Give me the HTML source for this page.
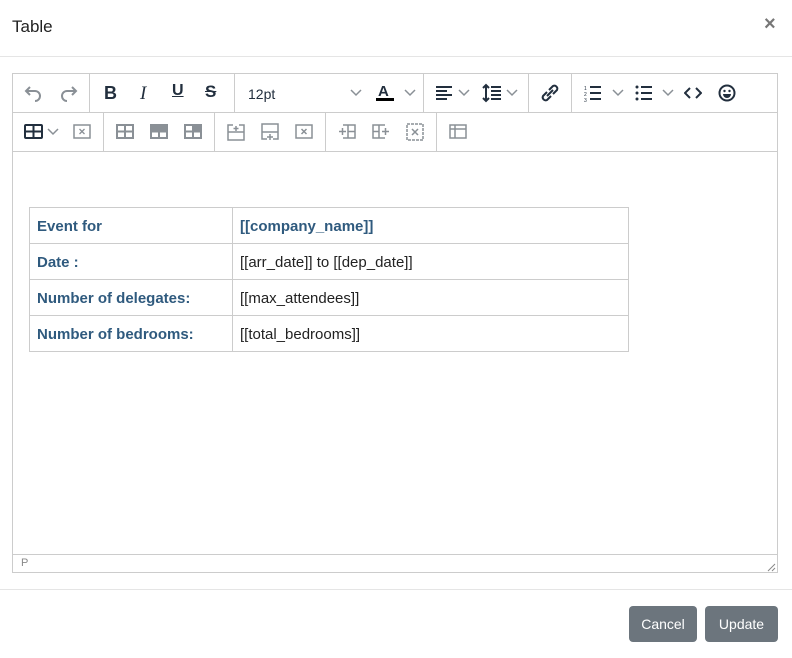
<!DOCTYPE html>
<html><head><style>
*{box-sizing:border-box;margin:0;padding:0}
body{width:792px;height:658px;background:#fff;font-family:"Liberation Sans",sans-serif;position:relative;overflow:hidden;color:#222}
.a{position:absolute}
.ic{position:absolute;color:#222f3e}
.sep{position:absolute;width:1px;background:#ccc}
svg{display:block}
td{border:1px solid #ccc;height:36px;padding:2px 7px 0;font-size:15px}
.lb{color:#2f5a7e;font-weight:bold}
.btn{position:absolute;top:606px;height:36px;background:#6c757d;color:#fff;border-radius:4px;font-size:14px;line-height:36px;text-align:center}
</style></head><body>
<div class="a" style="left:12px;top:17px;font-size:17px;color:#222">Table</div>
<div class="a" style="left:764px;top:13px;font-size:20px;color:#777;font-weight:bold">×</div>
<div class="a" style="left:0;top:56px;width:792px;height:1px;background:#e5e5e5"></div>

<div class="a" style="left:12px;top:73px;width:766px;height:500px;border:1px solid #ccc"></div>
<div class="a" style="left:13px;top:112px;width:764px;height:1px;background:#ccc"></div>
<div class="a" style="left:13px;top:151px;width:764px;height:1px;background:#ccc"></div>
<div class="a" style="left:13px;top:554px;width:764px;height:1px;background:#ccc"></div>
<div class="a" style="left:21px;top:557px;font-size:11px;color:#888">P</div>
<svg class="a" style="left:766px;top:562px" width="10" height="10"><path d="M9 2L2 9M9 6L6 9" stroke="#888"/></svg>

<div class="sep" style="left:89px;top:74px;height:38px"></div>
<div class="sep" style="left:234px;top:74px;height:38px"></div>
<div class="sep" style="left:423px;top:74px;height:38px"></div>
<div class="sep" style="left:528px;top:74px;height:38px"></div>
<div class="sep" style="left:571px;top:74px;height:38px"></div>
<div class="sep" style="left:103px;top:113px;height:38px"></div>
<div class="sep" style="left:214px;top:113px;height:38px"></div>
<div class="sep" style="left:325px;top:113px;height:38px"></div>
<div class="sep" style="left:436px;top:113px;height:38px"></div>

<svg class="a" style="left:24px;top:84px" width="20" height="18"><path d="M6 3L2 7l4 4M2 7h9a5 5 0 0 1 0 10" fill="none" stroke="#8a9096" stroke-width="2"/></svg>
<svg class="a" style="left:58px;top:84px" width="20" height="18"><path d="M14 3l4 4-4 4M18 7H9a5 5 0 0 0 0 10" fill="none" stroke="#8a9096" stroke-width="2"/></svg>
<div class="ic" style="left:104px;top:83px;font-size:18px;font-weight:bold">B</div>
<div class="ic" style="left:140px;top:83px;font-size:19px;font-style:italic;font-family:'Liberation Serif',serif">I</div>
<div class="ic" style="left:172px;top:82px;font-size:16px;font-weight:bold;text-decoration:underline">U</div>
<div class="ic" style="left:205px;top:82px;font-size:17px;font-weight:bold;text-decoration:line-through">S</div>
<div class="a" style="left:248px;top:86px;font-size:14px;color:#222f3e">12pt</div>
<svg class="a" style="left:350px;top:89px" width="12" height="8"><path d="M1 1l5 5 5-5" fill="none" stroke="#8a9096" stroke-width="1.5"/></svg>
<div class="ic" style="left:378px;top:83px;font-size:15px;font-weight:bold">A</div>
<div class="a" style="left:376px;top:98px;width:18px;height:3px;background:#000"></div>
<svg class="a" style="left:404px;top:89px" width="12" height="8"><path d="M1 1l5 5 5-5" fill="none" stroke="#8a9096" stroke-width="1.5"/></svg>
<svg class="a" style="left:436px;top:85px" width="18" height="16"><path d="M0 2h16M0 6h11M0 10h16M0 14h11" stroke="#222f3e" stroke-width="2"/></svg>
<svg class="a" style="left:458px;top:89px" width="12" height="8"><path d="M1 1l5 5 5-5" fill="none" stroke="#8a9096" stroke-width="1.5"/></svg>
<svg class="a" style="left:482px;top:83px" width="22" height="20"><path d="M4 2v16M1 5l3-3 3 3M1 15l3 3 3-3M9 4h10M9 8h10M9 12h10M9 16h10" fill="none" stroke="#222f3e" stroke-width="2"/></svg>
<svg class="a" style="left:506px;top:89px" width="12" height="8"><path d="M1 1l5 5 5-5" fill="none" stroke="#8a9096" stroke-width="1.5"/></svg>
<svg class="a" style="left:539px;top:82px" width="22" height="22"><path d="M8 14l6-6M8 10l-4 4a3 3 0 0 0 4 4l4-4M14 12l4-4a3 3 0 0 0-4-4l-4 4" fill="none" stroke="#222f3e" stroke-width="2"/></svg>
<svg class="a" style="left:584px;top:84px" width="18" height="18"><path d="M6 3h11M6 9h11M6 15h11" stroke="#222f3e" stroke-width="2"/><text x="0" y="6" font-size="5" fill="#222f3e">1</text><text x="0" y="12" font-size="5" fill="#222f3e">2</text><text x="0" y="18" font-size="5" fill="#222f3e">3</text></svg>
<svg class="a" style="left:612px;top:89px" width="12" height="8"><path d="M1 1l5 5 5-5" fill="none" stroke="#8a9096" stroke-width="1.5"/></svg>
<svg class="a" style="left:635px;top:84px" width="18" height="18"><circle cx="2" cy="3" r="1.5" fill="#222f3e"/><circle cx="2" cy="9" r="1.5" fill="#222f3e"/><circle cx="2" cy="15" r="1.5" fill="#222f3e"/><path d="M6 3h11M6 9h11M6 15h11" stroke="#222f3e" stroke-width="2"/></svg>
<svg class="a" style="left:662px;top:89px" width="12" height="8"><path d="M1 1l5 5 5-5" fill="none" stroke="#8a9096" stroke-width="1.5"/></svg>
<svg class="a" style="left:684px;top:86px" width="18" height="14"><path d="M6 2L1 7l5 5M12 2l5 5-5 5" fill="none" stroke="#222f3e" stroke-width="2"/></svg>
<svg class="a" style="left:718px;top:83px" width="20" height="20"><circle cx="9" cy="10" r="7.5" fill="none" stroke="#222f3e" stroke-width="2"/><circle cx="6.5" cy="8" r="1.2" fill="#222f3e"/><circle cx="11.5" cy="8" r="1.2" fill="#222f3e"/><path d="M5 11h8a4 4 0 0 1-8 0z" fill="#222f3e"/></svg>

<svg class="a" style="left:24px;top:124px" width="20" height="16"><rect x="1" y="1" width="17" height="13" rx="1" fill="none" stroke="#222f3e" stroke-width="2"/><path d="M1 7.5h17M9.5 1v13" stroke="#222f3e" stroke-width="2"/></svg>
<svg class="a" style="left:47px;top:128px" width="12" height="8"><path d="M1 1l5 5 5-5" fill="none" stroke="#8a9096" stroke-width="1.5"/></svg>
<svg class="a" style="left:73px;top:124px" width="18" height="16"><rect x="1" y="1" width="16" height="13" fill="none" stroke="#8a9096" stroke-width="1.5"/><path d="M6.5 5l5 5M11.5 5l-5 5" stroke="#8a9096" stroke-width="1.3"/></svg>
<svg class="a" style="left:116px;top:124px" width="18" height="16"><rect x="1" y="1" width="16" height="13" fill="none" stroke="#8a9096" stroke-width="2"/><path d="M1 7.5h16M9 1v13" stroke="#8a9096" stroke-width="2"/></svg>
<svg class="a" style="left:150px;top:124px" width="18" height="16"><rect x="1" y="1" width="16" height="13" fill="none" stroke="#8a9096" stroke-width="2"/><rect x="1" y="1" width="16" height="6" fill="#8a9096"/><path d="M1 7.5h16M9 7v7" stroke="#8a9096" stroke-width="2"/></svg>
<svg class="a" style="left:184px;top:124px" width="18" height="16"><rect x="1" y="1" width="16" height="13" fill="none" stroke="#8a9096" stroke-width="2"/><rect x="9" y="1" width="8" height="6" fill="#8a9096"/><path d="M1 7.5h16M9 1v13" stroke="#8a9096" stroke-width="2"/></svg>
<svg class="a" style="left:227px;top:123px" width="18" height="18"><path d="M6 2H1v15h16V2h-5M1 9h16M9 3v5M6.5 5.5h5" fill="none" stroke="#8a9096" stroke-width="1.5"/></svg>
<svg class="a" style="left:261px;top:123px" width="18" height="18"><path d="M6 16H1V1h16v15h-5M1 9h16M9 11v6M6 14h6" fill="none" stroke="#8a9096" stroke-width="1.5"/></svg>
<svg class="a" style="left:295px;top:124px" width="18" height="16"><rect x="1" y="1" width="16" height="13" fill="none" stroke="#8a9096" stroke-width="1.5"/><path d="M6.5 5l5 5M11.5 5l-5 5" stroke="#8a9096" stroke-width="1.5"/></svg>
<svg class="a" style="left:338px;top:124px" width="18" height="16"><path d="M5 1h12v13H5M10 1v13M10 7.5h7M1 7.5h7M4.5 4v7" fill="none" stroke="#8a9096" stroke-width="1.5"/></svg>
<svg class="a" style="left:372px;top:124px" width="18" height="16"><path d="M13 1H1v13h12M7 1v13M1 7.5h6M10 7.5h7M13.5 4v7" fill="none" stroke="#8a9096" stroke-width="1.5"/></svg>
<svg class="a" style="left:406px;top:123px" width="18" height="18"><rect x="1" y="1" width="16" height="16" fill="none" stroke="#8a9096" stroke-width="1.5" stroke-dasharray="3 1"/><path d="M6 6l6 6M12 6l-6 6" stroke="#8a9096" stroke-width="1.5"/></svg>
<svg class="a" style="left:449px;top:124px" width="18" height="16"><rect x="1" y="1" width="16" height="13" fill="none" stroke="#8a9096" stroke-width="1.5"/><path d="M1 5h16M6 1v13" stroke="#8a9096" stroke-width="1.5"/></svg>

<table class="a" style="left:29px;top:207px;width:600px;border-collapse:collapse">
<tr><td class="lb" style="width:203px">Event for</td><td class="lb">[[company_name]]</td></tr>
<tr><td class="lb">Date :</td><td>[[arr_date]] to [[dep_date]]</td></tr>
<tr><td class="lb">Number of delegates:</td><td>[[max_attendees]]</td></tr>
<tr><td class="lb">Number of bedrooms:</td><td>[[total_bedrooms]]</td></tr>
</table>

<div class="a" style="left:0;top:589px;width:792px;height:1px;background:#e5e5e5"></div>
<div class="btn" style="left:629px;width:68px">Cancel</div>
<div class="btn" style="left:705px;width:73px">Update</div>
</body></html>
